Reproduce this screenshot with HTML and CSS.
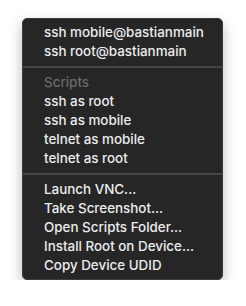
FILE: index.html
```
<!DOCTYPE html>
<html lang="en">
<head>
  <meta charset="UTF-8">
  <title>Device menu</title>
  <link rel="stylesheet" href="styles.css">
</head>
<body>
  <div class="menu">
    <div class="item">ssh mobile@bastianmain</div>
    <div class="item">ssh root@bastianmain</div>
    <div class="sep"></div>
    <div class="item disabled">Scripts</div>
    <div class="item">ssh as root</div>
    <div class="item">ssh as mobile</div>
    <div class="item">telnet as mobile</div>
    <div class="item">telnet as root</div>
    <div class="sep"></div>
    <div class="item">Launch VNC...</div>
    <div class="item">Take Screenshot...</div>
    <div class="item">Open Scripts Folder...</div>
    <div class="item">Install Root on Device...</div>
    <div class="item">Copy Device UDID</div>
  </div>
</body>
</html>
```

FILE: styles.css
```
body {
  margin: 0;
  background: #ffffff;
  font-family: Inter, 'Noto Sans', sans-serif;
}
.menu {
  margin: 18px 0 0 22px;
  width: 199px;
  padding: 4px 0;
  background: #262626;
  border: 1px solid #3c3c3c;
  border-radius: 5px;
  box-shadow: 0 6px 14px rgba(0,0,0,0.28);
}
.item {
  height: 19px;
  line-height: 19px;
  padding-left: 21px;
  font-size: 13.4px;
  font-weight: 500;
  color: #ececec;
  white-space: nowrap;
}
.item.disabled { color: #6a6a6a; }
.sep {
  height: 2px;
  margin: 5px 0;
  background: #464646;
}
```
